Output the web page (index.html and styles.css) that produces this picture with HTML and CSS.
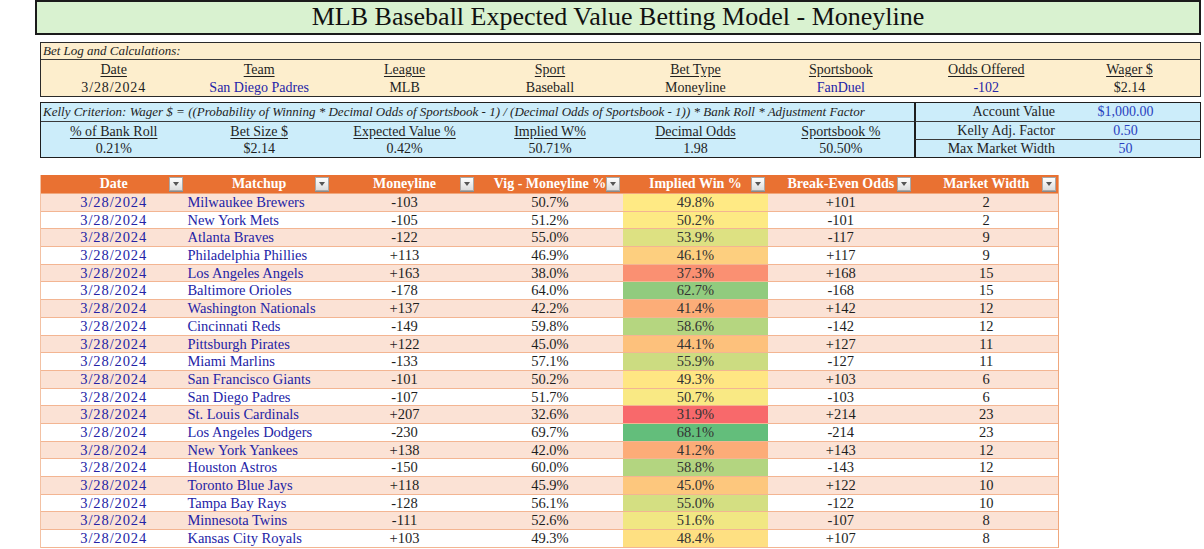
FILE: index.html
```html
<!DOCTYPE html>
<html>
<head>
<meta charset="utf-8">
<title>MLB Baseball Expected Value Betting Model - Moneyline</title>
<link rel="stylesheet" href="styles.css">
</head>
<body>
<div class="sheet">
  <div class="title">MLB Baseball Expected Value Betting Model - Moneyline</div>

  <div class="betlog">
    <div class="caption">Bet Log and Calculations:</div>
    <div class="hd">Date</div>
    <div class="hd">Team</div>
    <div class="hd">League</div>
    <div class="hd">Sport</div>
    <div class="hd">Bet Type</div>
    <div class="hd">Sportsbook</div>
    <div class="hd">Odds Offered</div>
    <div class="hd">Wager $</div>
    <div class="v date">3/28/2024</div>
    <div class="v blue">San Diego Padres</div>
    <div class="v">MLB</div>
    <div class="v">Baseball</div>
    <div class="v">Moneyline</div>
    <div class="v blue">FanDuel</div>
    <div class="v blue">-102</div>
    <div class="v">$2.14</div>
  </div>

  <div class="kelly">
    <div class="formula">Kelly Criterion: Wager $ = ((Probability of Winning * Decimal Odds of Sportsbook - 1) / (Decimal Odds of Sportsbook - 1)) * Bank Roll * Adjustment Factor</div>
    <div class="lbl sep">Account Value</div>
    <div class="val sep">$1,000.00</div>
    <div class="hd">% of Bank Roll</div>
    <div class="hd">Bet Size $</div>
    <div class="hd">Expected Value %</div>
    <div class="hd">Implied W%</div>
    <div class="hd">Decimal Odds</div>
    <div class="hd">Sportsbook %</div>
    <div class="lbl sep">Kelly Adj. Factor</div>
    <div class="val sep">0.50</div>
    <div class="v">0.21%</div>
    <div class="v">$2.14</div>
    <div class="v">0.42%</div>
    <div class="v">50.71%</div>
    <div class="v">1.98</div>
    <div class="v">50.50%</div>
    <div class="lbl">Max Market Width</div>
    <div class="val">50</div>
  </div>

  <div class="mtable">
    <div class="thead">
      <div class="th">Date<span class="dd"></span></div>
      <div class="th">Matchup<span class="dd"></span></div>
      <div class="th">Moneyline<span class="dd"></span></div>
      <div class="th">Vig - Moneyline %<span class="dd"></span></div>
      <div class="th">Implied Win %<span class="dd"></span></div>
      <div class="th">Break-Even Odds<span class="dd"></span></div>
      <div class="th">Market Width<span class="dd"></span></div>
    </div>
    <div class="row"><div class="c date">3/28/2024</div><div class="c team">Milwaukee Brewers</div><div class="c">-103</div><div class="c">50.7%</div><div class="c iw" style="background:rgb(255,234,132)">49.8%</div><div class="c">+101</div><div class="c">2</div></div>
    <div class="row"><div class="c date">3/28/2024</div><div class="c team">New York Mets</div><div class="c">-105</div><div class="c">51.2%</div><div class="c iw" style="background:rgb(253,234,132)">50.2%</div><div class="c">-101</div><div class="c">2</div></div>
    <div class="row"><div class="c date">3/28/2024</div><div class="c team">Atlanta Braves</div><div class="c">-122</div><div class="c">55.0%</div><div class="c iw" style="background:rgb(221,225,130)">53.9%</div><div class="c">-117</div><div class="c">9</div></div>
    <div class="row"><div class="c date">3/28/2024</div><div class="c team">Philadelphia Phillies</div><div class="c">+113</div><div class="c">46.9%</div><div class="c iw" style="background:rgb(253,207,127)">46.1%</div><div class="c">+117</div><div class="c">9</div></div>
    <div class="row"><div class="c date">3/28/2024</div><div class="c team">Los Angeles Angels</div><div class="c">+163</div><div class="c">38.0%</div><div class="c iw" style="background:rgb(250,144,114)">37.3%</div><div class="c">+168</div><div class="c">15</div></div>
    <div class="row"><div class="c date">3/28/2024</div><div class="c team">Baltimore Orioles</div><div class="c">-178</div><div class="c">64.0%</div><div class="c iw" style="background:rgb(145,203,126)">62.7%</div><div class="c">-168</div><div class="c">15</div></div>
    <div class="row"><div class="c date">3/28/2024</div><div class="c team">Washington Nationals</div><div class="c">+137</div><div class="c">42.2%</div><div class="c iw" style="background:rgb(252,173,120)">41.4%</div><div class="c">+142</div><div class="c">12</div></div>
    <div class="row"><div class="c date">3/28/2024</div><div class="c team">Cincinnati Reds</div><div class="c">-149</div><div class="c">59.8%</div><div class="c iw" style="background:rgb(181,214,128)">58.6%</div><div class="c">-142</div><div class="c">12</div></div>
    <div class="row"><div class="c date">3/28/2024</div><div class="c team">Pittsburgh Pirates</div><div class="c">+122</div><div class="c">45.0%</div><div class="c iw" style="background:rgb(253,193,124)">44.1%</div><div class="c">+127</div><div class="c">11</div></div>
    <div class="row"><div class="c date">3/28/2024</div><div class="c team">Miami Marlins</div><div class="c">-133</div><div class="c">57.1%</div><div class="c iw" style="background:rgb(204,220,129)">55.9%</div><div class="c">-127</div><div class="c">11</div></div>
    <div class="row"><div class="c date">3/28/2024</div><div class="c team">San Francisco Giants</div><div class="c">-101</div><div class="c">50.2%</div><div class="c iw" style="background:rgb(255,230,131)">49.3%</div><div class="c">+103</div><div class="c">6</div></div>
    <div class="row"><div class="c date">3/28/2024</div><div class="c team">San Diego Padres</div><div class="c">-107</div><div class="c">51.7%</div><div class="c iw" style="background:rgb(249,233,132)">50.7%</div><div class="c">-103</div><div class="c">6</div></div>
    <div class="row"><div class="c date">3/28/2024</div><div class="c team">St. Louis Cardinals</div><div class="c">+207</div><div class="c">32.6%</div><div class="c iw" style="background:rgb(248,105,107)">31.9%</div><div class="c">+214</div><div class="c">23</div></div>
    <div class="row"><div class="c date">3/28/2024</div><div class="c team">Los Angeles Dodgers</div><div class="c">-230</div><div class="c">69.7%</div><div class="c iw" style="background:rgb(99,190,123)">68.1%</div><div class="c">-214</div><div class="c">23</div></div>
    <div class="row"><div class="c date">3/28/2024</div><div class="c team">New York Yankees</div><div class="c">+138</div><div class="c">42.0%</div><div class="c iw" style="background:rgb(252,172,120)">41.2%</div><div class="c">+143</div><div class="c">12</div></div>
    <div class="row"><div class="c date">3/28/2024</div><div class="c team">Houston Astros</div><div class="c">-150</div><div class="c">60.0%</div><div class="c iw" style="background:rgb(179,213,128)">58.8%</div><div class="c">-143</div><div class="c">12</div></div>
    <div class="row"><div class="c date">3/28/2024</div><div class="c team">Toronto Blue Jays</div><div class="c">+118</div><div class="c">45.9%</div><div class="c iw" style="background:rgb(253,199,125)">45.0%</div><div class="c">+122</div><div class="c">10</div></div>
    <div class="row"><div class="c date">3/28/2024</div><div class="c team">Tampa Bay Rays</div><div class="c">-128</div><div class="c">56.1%</div><div class="c iw" style="background:rgb(212,223,130)">55.0%</div><div class="c">-122</div><div class="c">10</div></div>
    <div class="row"><div class="c date">3/28/2024</div><div class="c team">Minnesota Twins</div><div class="c">-111</div><div class="c">52.6%</div><div class="c iw" style="background:rgb(241,231,131)">51.6%</div><div class="c">-107</div><div class="c">8</div></div>
    <div class="row"><div class="c date">3/28/2024</div><div class="c team">Kansas City Royals</div><div class="c">+103</div><div class="c">49.3%</div><div class="c iw" style="background:rgb(254,224,130)">48.4%</div><div class="c">+107</div><div class="c">8</div></div>
  </div>
</div>
</body>
</html>
```

FILE: styles.css
```css
* { box-sizing: border-box; }

body {
  margin: 0;
  background: #ffffff;
  font-family: "Liberation Serif", "Times New Roman", serif;
  color: #1e1e1e;
  font-size: 14px;
}

.sheet {
  display: flex;
  flex-direction: column;
  align-items: flex-start;
  padding-left: 35px;
}

.title {
  width: 1166px;
  height: 35px;
  border: 2px solid #1b1b1b;
  background: #d9f2d0;
  font-size: 26px;
  line-height: 30px;
  text-align: center;
  color: #111;
}

.blue { color: #2424a8; }

.date { letter-spacing: 0.9px; }

/* Bet log */
.betlog {
  margin-top: 7px;
  margin-left: 5px;
  width: 1161px;
  border: 1px solid #2a2a2a;
  background: #fdeecd;
  display: grid;
  grid-template-columns: repeat(7, 145.43px) 1fr;
  grid-template-rows: 17px 19px 17px;
}

.caption {
  grid-column: 1 / -1;
  font-style: italic;
  font-size: 13px;
  line-height: 16px;
  padding-left: 2px;
  border-bottom: 1px solid #3a3a3a;
}

.hd {
  text-align: center;
  text-decoration: underline;
  text-underline-offset: 2px;
  line-height: 20px;
  white-space: nowrap;
}

.v {
  text-align: center;
  line-height: 17px;
  white-space: nowrap;
}

/* Kelly */
.kelly {
  margin-top: 5px;
  margin-left: 5px;
  width: 1161px;
  border: 1px solid #1e1e1e;
  background: #ccedfa;
  display: grid;
  grid-template-columns: repeat(6, 145.43px) 145.43px 1fr;
  grid-template-rows: 19px 18px 17px;
}

.kelly .hd { line-height: 19px; }
.kelly .v { line-height: 17px; }

.formula {
  grid-column: 1 / 7;
  font-style: italic;
  font-size: 13px;
  line-height: 18px;
  padding-left: 2px;
  white-space: nowrap;
  border-bottom: 1px solid #3a3a3a;
}

.lbl {
  border-left: 2px solid #1e1e1e;
  text-align: right;
  padding-right: 4px;
  line-height: 17px;
  white-space: nowrap;
}

.val {
  text-align: center;
  color: #2a3fc0;
  line-height: 17px;
  padding-right: 8px;
}

.sep { border-bottom: 1px solid #3a3a3a; }

/* Main table */
.mtable {
  margin-top: 17px;
  margin-left: 5px;
  width: 1019px;
  border-left: 1px solid #f3c1a3;
  border-right: 1px solid #f0a77c;
  font-size: 14.5px;
}

.thead,
.row {
  display: grid;
  grid-template-columns: repeat(7, 145.43px);
}

.thead {
  height: 19px;
  background: #e97132;
  border-bottom: 1px solid #f0a77c;
}

.th {
  position: relative;
  color: #ffffff;
  font-weight: bold;
  font-size: 14px;
  text-align: center;
  line-height: 18px;
  white-space: nowrap;
}

.dd {
  position: absolute;
  right: 3px;
  top: 2px;
  width: 14px;
  height: 14px;
  border: 1px solid #a9a9a9;
  background: linear-gradient(#ffffff, #dcdcdc);
  box-shadow: 0 1px 0 #8a8a8a;
}

.dd::after {
  content: "";
  position: absolute;
  left: 3px;
  top: 4px;
  border-left: 3.5px solid transparent;
  border-right: 3.5px solid transparent;
  border-top: 4px solid #555555;
}

.row {
  height: 17.7px;
  background: #fbe2d5;
  border-bottom: 1px solid #f3b592;
}

.row:nth-child(odd) { background: #ffffff; }

.c {
  text-align: center;
  line-height: 16.7px;
  white-space: nowrap;
  color: #1e1e1e;
}

.c.date { color: #2323a6; }

.c.team {
  text-align: left;
  padding-left: 1px;
  color: #2323a6;
}

.c.iw { color: #333333; }
```
